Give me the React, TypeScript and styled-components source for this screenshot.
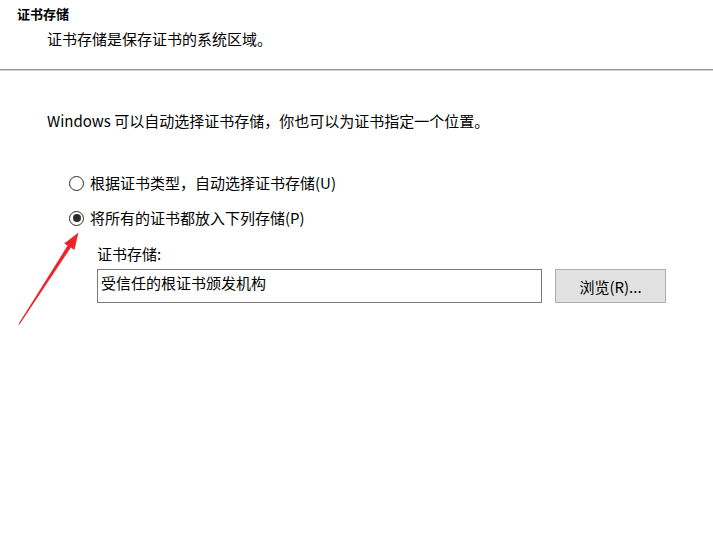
import React from 'react'
import styled, { createGlobalStyle } from 'styled-components'

const GlobalStyle = createGlobalStyle`
  html, body {
    margin: 0;
    padding: 0;
    background: #fff;
  }
  body {
    font-family: "Noto Sans CJK SC", "Noto Sans", sans-serif;
    color: #000;
  }
`

const Page = styled.div`
  position: relative;
  width: 713px;
  height: 551px;
  overflow: hidden;
  background: #fff;
`

const Header = styled.div`
  height: 70px;
  box-sizing: border-box;
  padding: 4px 0 0 17px;
  border-bottom: 1px solid #9a9a9a;
  box-shadow: 0 1px 0 #cfcfcf;
`

const Title = styled.div`
  font-size: 13px;
  font-weight: bold;
  line-height: 20px;
`

const Subtitle = styled.div`
  margin: 5px 0 0 30px;
  font-size: 15px;
  line-height: 20px;
`

const Content = styled.div`
  padding: 41px 0 0 47px;
`

const Intro = styled.div`
  font-size: 15px;
  line-height: 20px;
`

const RadioGroup = styled.div`
  display: flex;
  flex-direction: column;
  gap: 15px;
  margin: 42px 0 0 22px;
`

const RadioRow = styled.label`
  display: flex;
  align-items: center;
  gap: 6px;
  font-size: 15px;
  line-height: 20px;
`

const RadioCircle = styled.span<{ $checked?: boolean }>`
  flex-shrink: 0;
  width: 15px;
  height: 15px;
  box-sizing: border-box;
  border: 1.5px solid #2b2b2b;
  border-radius: 50%;
  display: flex;
  align-items: center;
  justify-content: center;
  background: #fff;

  &::after {
    content: '';
    width: 8px;
    height: 8px;
    border-radius: 50%;
    background: ${p => (p.$checked ? '#2b2b2b' : 'transparent')};
  }
`

const StoreBlock = styled.div`
  margin: 16px 0 0 50px;
`

const FieldLabel = styled.div`
  font-size: 15px;
  line-height: 20px;
`

const FieldRow = styled.div`
  display: flex;
  gap: 13px;
  margin-top: 5px;
`

const StoreInput = styled.div`
  width: 445px;
  height: 34px;
  box-sizing: border-box;
  border: 1px solid #7a7a7a;
  padding: 3px 0 0 3px;
  font-size: 15px;
  line-height: 20px;
`

const BrowseButton = styled.button`
  width: 111px;
  height: 34px;
  box-sizing: border-box;
  border: 1px solid #adadad;
  background: #e1e1e1;
  font-family: "Noto Sans CJK SC", "Noto Sans", sans-serif;
  font-size: 15px;
  color: #000;
  padding: 0;
`

const Arrow = styled.svg`
  position: absolute;
  left: 0;
  top: 0;
  pointer-events: none;
`

export default function App() {
  return (
    <Page>
      <GlobalStyle />
      <Header>
        <Title>证书存储</Title>
        <Subtitle>证书存储是保存证书的系统区域。</Subtitle>
      </Header>
      <Content>
        <Intro>Windows 可以自动选择证书存储，你也可以为证书指定一个位置。</Intro>
        <RadioGroup>
          <RadioRow>
            <RadioCircle />
            根据证书类型，自动选择证书存储(U)
          </RadioRow>
          <RadioRow>
            <RadioCircle $checked />
            将所有的证书都放入下列存储(P)
          </RadioRow>
        </RadioGroup>
        <StoreBlock>
          <FieldLabel>证书存储:</FieldLabel>
          <FieldRow>
            <StoreInput>受信任的根证书颁发机构</StoreInput>
            <BrowseButton>浏览(R)...</BrowseButton>
          </FieldRow>
        </StoreBlock>
      </Content>
      <Arrow width="713" height="551" viewBox="0 0 713 551">
        <polygon
          points="18.5,324 67.6,245.6 64.2,243.4 78.5,232.5 74.4,250 70.8,247.6 19.5,324.6"
          fill="#ec2529"
        />
      </Arrow>
    </Page>
  )
}
